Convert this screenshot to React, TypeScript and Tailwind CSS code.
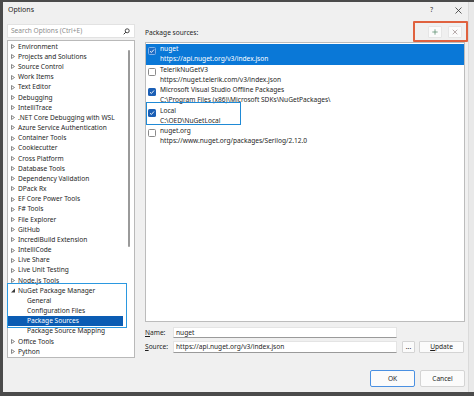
import React from "react";

const treeItems: { label: string; level: number; expanded?: boolean; selected?: boolean; leaf?: boolean }[] = [
  { label: "Environment", level: 0 },
  { label: "Projects and Solutions", level: 0 },
  { label: "Source Control", level: 0 },
  { label: "Work Items", level: 0 },
  { label: "Text Editor", level: 0 },
  { label: "Debugging", level: 0 },
  { label: "IntelliTrace", level: 0 },
  { label: ".NET Core Debugging with WSL", level: 0 },
  { label: "Azure Service Authentication", level: 0 },
  { label: "Container Tools", level: 0 },
  { label: "Cookiecutter", level: 0 },
  { label: "Cross Platform", level: 0 },
  { label: "Database Tools", level: 0 },
  { label: "Dependency Validation", level: 0 },
  { label: "DPack Rx", level: 0 },
  { label: "EF Core Power Tools", level: 0 },
  { label: "F# Tools", level: 0 },
  { label: "File Explorer", level: 0 },
  { label: "GitHub", level: 0 },
  { label: "IncrediBuild Extension", level: 0 },
  { label: "IntelliCode", level: 0 },
  { label: "Live Share", level: 0 },
  { label: "Live Unit Testing", level: 0 },
  { label: "Node.js Tools", level: 0 },
  { label: "NuGet Package Manager", level: 0, expanded: true },
  { label: "General", level: 1, leaf: true },
  { label: "Configuration Files", level: 1, leaf: true },
  { label: "Package Sources", level: 1, leaf: true, selected: true },
  { label: "Package Source Mapping", level: 1, leaf: true },
  { label: "Office Tools", level: 0 },
  { label: "Python", level: 0 },
];

const sources = [
  { name: "nuget", url: "https://api.nuget.org/v3/index.json", checked: true, selected: true },
  { name: "TelerikNuGetV3", url: "https://nuget.telerik.com/v3/index.json", checked: false },
  { name: "Microsoft Visual Studio Offline Packages", url: "C:\\Program Files (x86)\\Microsoft SDKs\\NuGetPackages\\", checked: true },
  { name: "Local", url: "C:\\OED\\NuGetLocal", checked: true },
  { name: "nuget.org", url: "https://www.nuget.org/packages/Serilog/2.12.0", checked: false },
];

function Arrow({ expanded }: { expanded?: boolean }) {
  if (expanded) {
    return (
      <svg width="4" height="5" viewBox="0 0 4 5" className="block">
        <polygon points="4,0.5 4,4.5 0,4.5" fill="#3a3a3a" />
      </svg>
    );
  }
  return (
    <svg width="4" height="5" viewBox="0 0 4 5" className="block">
      <polygon points="0.5,0.5 3.5,2.5 0.5,4.5" fill="none" stroke="#6a6a6a" strokeWidth="0.8" />
    </svg>
  );
}

function Check({ checked, onBlue }: { checked: boolean; onBlue?: boolean }) {
  if (!checked) {
    return <div className="w-[8px] h-[8px] mt-[3px] shrink-0 rounded-[1.5px] border border-[#8a8a8a] bg-white" />;
  }
  return (
    <div
      className={
        onBlue
          ? "w-[8px] h-[8px] mt-[3px] shrink-0 rounded-[1.5px] border border-[#7fb2ea] bg-[#1f6cc4] flex items-center justify-center"
          : "w-[8px] h-[8px] mt-[3px] shrink-0 rounded-[1.5px] bg-[#1b5fb5] flex items-center justify-center"
      }
    >
      <svg width="6" height="6" viewBox="0 0 6 6" className="block">
        <polyline points="1,3.2 2.4,4.5 5,1.5" fill="none" stroke="#ffffff" strokeWidth="0.9" />
      </svg>
    </div>
  );
}

export default function App() {
  return (
    <div
      className="w-[474px] h-[396px] bg-[#4b4b4b] flex flex-col overflow-hidden text-[#1e1e1e]"
      style={{ fontFamily: '"Noto Sans", "Open Sans", sans-serif' }}
    >
      <div className="flex flex-1 mt-[2px]">
        {/* Window */}
        <div className="relative ml-[3px] w-[465px] h-[390px] bg-[#f0f0f0] flex flex-col text-[6.6px]">
          {/* Title bar */}
          <div className="h-[16px] flex items-center justify-between pl-[5px] pr-[6px]">
            <span className="text-[7px]">Options</span>
            <div className="flex items-center gap-[22px]">
              <span className="text-[6.5px] text-[#333]">?</span>
              <svg width="7" height="7" viewBox="0 0 7 7" className="block">
                <path d="M0.5 0.5 L6.5 6.5 M6.5 0.5 L0.5 6.5" stroke="#333" strokeWidth="0.8" />
              </svg>
            </div>
          </div>

          {/* Body */}
          <div className="flex pl-[4px] gap-[10px]">
            {/* Left column */}
            <div className="w-[128px] flex flex-col">
              <div className="mt-[6px] h-[14px] bg-white border border-[#e2e2e2] flex items-center justify-between pl-[3px] pr-[4px]">
                <span className="text-[#8c8c8c]">Search Options (Ctrl+E)</span>
                <svg width="7" height="7" viewBox="0 0 7 7" className="block">
                  <circle cx="4.2" cy="2.8" r="2" fill="none" stroke="#333" strokeWidth="0.9" />
                  <path d="M2.8 4.2 L0.7 6.3" stroke="#333" strokeWidth="1" />
                </svg>
              </div>
              <div className="mt-[2px] h-[318px] bg-white border border-[#b9b9b9] flex">
                <div className="w-[115px] pt-[0.5px] flex flex-col">
                  {treeItems.map((it) => (
                    <div
                      key={it.label}
                      className={
                        it.selected
                          ? "h-[10.23px] flex items-center bg-[#0b5cb3] text-white"
                          : "h-[10.23px] flex items-center"
                      }
                    >
                      {it.leaf ? (
                        <span className="pl-[19px] whitespace-nowrap">{it.label}</span>
                      ) : (
                        <>
                          <span className="pl-[3px] w-[7px] shrink-0 flex items-center">
                            <Arrow expanded={it.expanded} />
                          </span>
                          <span className="pl-[3px] whitespace-nowrap">{it.label}</span>
                        </>
                      )}
                    </div>
                  ))}
                </div>
                <div className="flex-1 pt-[9px] pl-[5px]">
                  <div className="w-[2px] h-[197px] bg-[#9a9a9a] rounded-full" />
                </div>
              </div>
            </div>

            {/* Right column */}
            <div className="w-[320px] flex flex-col">
              <div className="h-[24px] flex justify-between items-start">
                <span className="mt-[10px] leading-[10px]">Package sources:</span>
                <div className="mt-[8px] mr-[3px] flex gap-[6px]">
                  <div className="w-[14px] h-[12px] bg-[#fbfbfb] border border-[#e6e6e6] rounded-[1px] flex items-center justify-center">
                    <svg width="6" height="6" viewBox="0 0 6 6" className="block">
                      <path d="M3 0.3 V5.7 M0.3 3 H5.7" stroke="#5f9373" strokeWidth="0.8" />
                    </svg>
                  </div>
                  <div className="w-[14px] h-[12px] bg-[#fbfbfb] border border-[#e6e6e6] rounded-[1px] flex items-center justify-center">
                    <svg width="6" height="6" viewBox="0 0 6 6" className="block">
                      <path d="M0.7 0.7 L5.3 5.3 M5.3 0.7 L0.7 5.3" stroke="#9a8a8a" strokeWidth="0.7" />
                    </svg>
                  </div>
                </div>
              </div>

              {/* List */}
              <div className="h-[280px] bg-white border border-[#bcbcbc] pt-[1px] flex flex-col">
                {sources.map((s) => (
                  <div
                    key={s.name}
                    className={
                      s.selected
                        ? "h-[20.5px] flex gap-[4px] pl-[2px] bg-[#0a78d7] text-white"
                        : "h-[20.5px] flex gap-[4px] pl-[2px]"
                    }
                  >
                    <Check checked={s.checked} onBlue={s.selected} />
                    <div className="flex flex-col leading-[10px] whitespace-nowrap">
                      <span>{s.name}</span>
                      <span>{s.url}</span>
                    </div>
                  </div>
                ))}
              </div>

              {/* Name */}
              <div className="mt-[5px] flex items-center">
                <span className="w-[28px]">
                  <span className="underline">N</span>ame:
                </span>
                <div className="w-[224px] h-[11px] bg-white border border-[#e4e4e4] border-b-[#9a9a9a] flex items-center pl-[2px]">
                  nuget
                </div>
              </div>
              {/* Source */}
              <div className="mt-[3px] flex items-center">
                <span className="w-[28px]">
                  <span className="underline">S</span>ource:
                </span>
                <div className="w-[224px] h-[12px] bg-white border border-[#e4e4e4] border-b-[#9a9a9a] flex items-center pl-[2px]">
                  https://api.nuget.org/v3/index.json
                </div>
                <div className="ml-[5px] w-[13px] h-[12px] bg-[#fbfbfb] border border-[#d4d4d4] rounded-[1px] flex items-center justify-center leading-none">
                  ...
                </div>
                <div className="ml-[4px] w-[45px] h-[12px] bg-[#fbfbfb] border border-[#d4d4d4] rounded-[1px] flex items-center justify-center">
                  <span className="underline">U</span>pdate
                </div>
              </div>

              {/* OK / Cancel */}
              <div className="mt-[17px] flex justify-end gap-[5px]">
                <div className="w-[45px] h-[17px] bg-[#fbfbfb] border border-[#4a90e2] rounded-[2px] flex items-center justify-center">
                  OK
                </div>
                <div className="w-[45px] h-[17px] bg-[#fbfbfb] border border-[#d4d4d4] rounded-[2px] flex items-center justify-center">
                  Cancel
                </div>
              </div>
            </div>
          </div>

          {/* Annotation overlays */}
          <div className="absolute left-[410px] top-[19px] w-[55px] h-[21px] border-2 border-[#e0623f] rounded-[1px]" />
          <div className="absolute left-[143px] top-[100px] w-[95px] h-[23px] border-[1.5px] border-[#1f8ad6]" />
          <div className="absolute left-[4px] top-[281px] w-[120px] h-[45px] border-[1.5px] border-[#2b98e0]" />
        </div>
        {/* right strip */}
        <div className="flex-1 h-[390px] bg-[#e9e9e9] border-l border-[#dadada]" />
      </div>
      <div className="h-[4px]" />
    </div>
  );
}
